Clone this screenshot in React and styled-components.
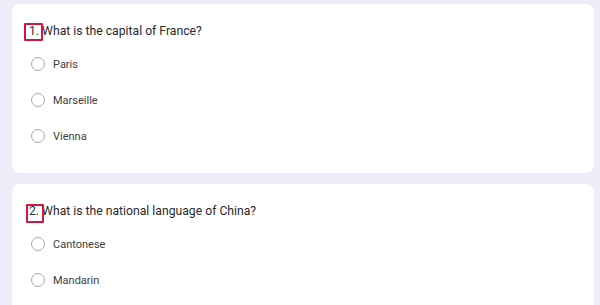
import React from "react";
import styled, { createGlobalStyle } from "styled-components";

const Global = createGlobalStyle`
  html, body { margin: 0; padding: 0; background: #eeecf8; }
  body { font-family: Roboto, "Noto Sans", sans-serif; }
`;

const Page = styled.div`
  width: 600px;
  height: 305px;
  overflow: hidden;
  background: #eeecf8;
  padding: 4px 6px 0 12px;
  box-sizing: border-box;
  display: flex;
  flex-direction: column;
  gap: 11px;
`;

const Card = styled.section`
  background: #ffffff;
  border-radius: 8px;
  padding: 18px 17px 19px;
  flex-shrink: 0;
`;

const Question = styled.div`
  position: relative;
  font-size: 12.2px;
  line-height: 18px;
  color: #2a2a2e;
  white-space: nowrap;
`;

const Highlight = styled.span`
  position: absolute;
  left: ${(p) => p.$x}px;
  top: ${(p) => p.$y}px;
  width: ${(p) => p.$w}px;
  height: ${(p) => p.$h}px;
  border: 2.5px solid #d1173f;
  box-sizing: border-box;
  border-radius: 1px;
  pointer-events: none;
`;

const Options = styled.div`
  margin-top: 6px;
  display: flex;
  flex-direction: column;
`;

const Option = styled.label`
  height: 36px;
  display: flex;
  align-items: center;
  gap: 8px;
  padding-left: 2px;
  font-size: 11px;
  color: #3c4043;
`;

const Radio = styled.span`
  width: 14px;
  height: 14px;
  border-radius: 50%;
  border: 1.5px solid #a8a8ad;
  box-sizing: border-box;
  flex-shrink: 0;
`;

const data = [
  {
    n: "1.",
    q: "What is the capital of France?",
    opts: ["Paris", "Marseille", "Vienna"],
    box: { x: -5, y: 1, w: 19, h: 18 },
  },
  {
    n: "2.",
    q: "What is the national language of China?",
    opts: ["Cantonese", "Mandarin"],
    box: { x: -3, y: 2, w: 18, h: 19 },
  },
];

export default function App() {
  return (
    <>
      <Global />
      <Page>
        {data.map((item) => (
          <Card key={item.n}>
            <Question>
              <Highlight $x={item.box.x} $y={item.box.y} $w={item.box.w} $h={item.box.h} />
              {item.n} {item.q}
            </Question>
            <Options>
              {item.opts.map((o) => (
                <Option key={o}>
                  <Radio />
                  {o}
                </Option>
              ))}
            </Options>
          </Card>
        ))}
      </Page>
    </>
  );
}
